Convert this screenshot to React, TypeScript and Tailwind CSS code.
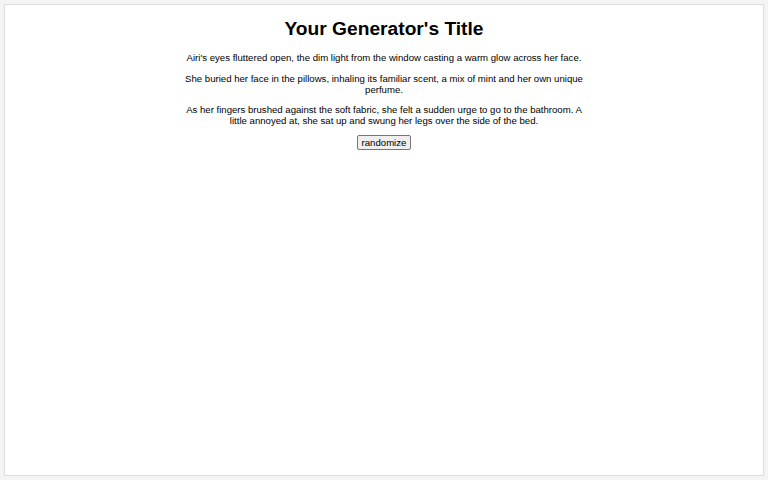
export default function App() {
  const paragraphs = [
    "Airi's eyes fluttered open, the dim light from the window casting a warm glow across her face.",
    "She buried her face in the pillows, inhaling its familiar scent, a mix of mint and her own unique perfume.",
    "As her fingers brushed against the soft fabric, she felt a sudden urge to go to the bathroom. A little annoyed at, she sat up and swung her legs over the side of the bed.",
  ];

  return (
    <div className="h-[480px] w-[768px] bg-[#f4f4f4] p-[4px] font-['Liberation_Sans',Arial,sans-serif] text-black">
      <div className="flex h-full flex-col items-center border border-[#dcdcdc] bg-white pt-[13px]">
        <h1 className="text-[19.2px] font-bold leading-[22px]">Your Generator's Title</h1>
        <div className="mt-[12px] flex w-[400px] flex-col gap-[9.6px] text-center text-[9.6px] leading-[11px]">
          {paragraphs.map((p) => (
            <p key={p}>{p}</p>
          ))}
        </div>
        <button className="mt-[9px] rounded-[2px] border border-[#767676] bg-[#efefef] px-[4px] py-[1px] text-[9.6px] leading-[11px]">
          randomize
        </button>
      </div>
    </div>
  );
}
